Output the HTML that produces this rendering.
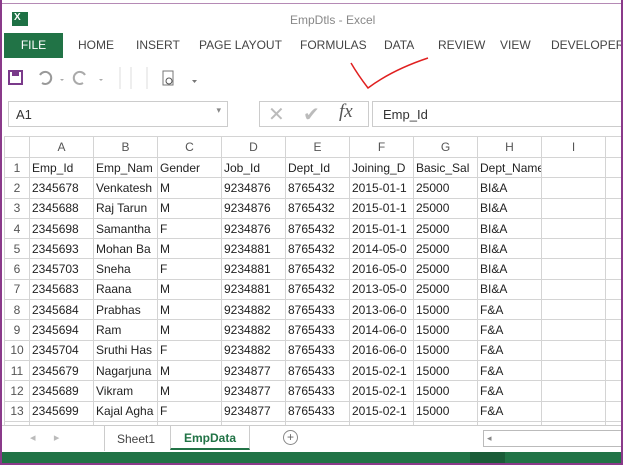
<!DOCTYPE html><html><head><style>
*{margin:0;padding:0;box-sizing:border-box}
body{width:623px;height:465px;overflow:hidden;background:#fff;font-family:"Liberation Sans",sans-serif;position:relative}
.a{position:absolute}
.tab{position:absolute;top:38px;font-size:12px;color:#444}
table{border-collapse:collapse;position:absolute;left:4px;top:136px;font-size:12px;color:#222;table-layout:fixed;width:631px}
td{border:1px solid #d4d4d4;height:20.3px;padding:0 2px;white-space:nowrap;overflow:hidden}
tr.h td{height:21px;text-align:center;color:#555;background:#fff;font-size:12px}
td.r{text-align:center;color:#555}
</style></head><body>
<div class="a" style="left:0;top:0;width:623px;height:465px;border:2px solid #8a3a8a;border-top:none;z-index:9;pointer-events:none"></div>
<div class="a" style="left:0;top:0;width:623px;height:4px;border-bottom:1px solid #b58ab5"></div>
<div class="a" style="left:12px;top:12px;width:16px;height:14px;background:#1e7145;color:#fff;font-size:10px;font-weight:bold;padding-left:2px">X</div>
<div class="a" style="left:290px;top:13px;font-size:12px;color:#888">EmpDtls - Excel</div>
<div class="a" style="left:4px;top:33px;width:59px;height:25px;background:#217346;color:#fff;font-size:12px;text-align:center;line-height:25px">FILE</div>
<div class="tab" style="left:78px">HOME</div><div class="tab" style="left:136px">INSERT</div><div class="tab" style="left:199px">PAGE LAYOUT</div><div class="tab" style="left:300px">FORMULAS</div><div class="tab" style="left:384px">DATA</div><div class="tab" style="left:438px">REVIEW</div><div class="tab" style="left:500px">VIEW</div><div class="tab" style="left:551px">DEVELOPER</div>
<svg class="a" style="left:0;top:55px" width="623" height="40"><path d="M351 8 Q358 20 368 33 Q392 15 428 3" stroke="#e02020" stroke-width="1.5" fill="none"/>
<rect x="9" y="16" width="13" height="13" fill="none" stroke="#7a3a8a" stroke-width="2"/><rect x="12" y="17" width="7" height="4" fill="#7a3a8a"/>
<path d="M40 20 a6 6 0 1 1 2 8" stroke="#999" stroke-width="2" fill="none"/><path d="M60 24h4l-2 2z" fill="#aaa"/><path d="M85 20 a6 6 0 1 0 -2 8" stroke="#aaa" stroke-width="2" fill="none"/><path d="M99 24h4l-2 2z" fill="#aaa"/>
<path d="M120 12v22M131 12v22M147 12v22" stroke="#ddd"/>
<rect x="163" y="16" width="10" height="14" fill="none" stroke="#777"/><circle cx="169" cy="26" r="3" fill="none" stroke="#555"/><path d="M192 25h5l-2.5 3z" fill="#777"/></svg>
<div class="a" style="left:8px;top:101px;width:220px;height:26px;border:1px solid #ccc;font-size:13px;padding:5px 7px;color:#333">A1<span style="position:absolute;right:6px;top:3px;font-size:9px;color:#888">▾</span></div>
<div class="a" style="left:259px;top:101px;width:110px;height:26px;border:1px solid #ccc"></div>
<div class="a" style="left:268px;top:102px;font-size:20px;color:#bbb">✕</div>
<div class="a" style="left:303px;top:102px;font-size:20px;color:#bbb">✔</div>
<div class="a" style="left:339px;top:101px;font-size:19px;color:#555;font-family:'Liberation Serif',serif;font-style:italic">fx</div>
<div class="a" style="left:372px;top:101px;width:260px;height:26px;border:1px solid #ccc;font-size:13px;padding:5px 10px;color:#333">Emp_Id</div>
<table>
<colgroup><col style="width:25px"><col style="width:64px"><col style="width:64px"><col style="width:64px"><col style="width:64px"><col style="width:64px"><col style="width:64px"><col style="width:64px"><col style="width:64px"><col style="width:64px"><col style="width:30px"></colgroup>
<tr class="h"><td></td><td>A</td><td>B</td><td>C</td><td>D</td><td>E</td><td>F</td><td>G</td><td>H</td><td>I</td><td></td></tr>
<tr><td class="r">1</td><td>Emp_Id</td><td>Emp_Nam</td><td>Gender</td><td>Job_Id</td><td>Dept_Id</td><td>Joining_D</td><td>Basic_Sal</td><td>Dept_Name</td><td></td><td></td></tr>
<tr><td class="r">2</td><td>2345678</td><td>Venkatesh</td><td>M</td><td>9234876</td><td>8765432</td><td>2015-01-1</td><td>25000</td><td>BI&amp;A</td><td></td><td></td></tr>
<tr><td class="r">3</td><td>2345688</td><td>Raj Tarun</td><td>M</td><td>9234876</td><td>8765432</td><td>2015-01-1</td><td>25000</td><td>BI&amp;A</td><td></td><td></td></tr>
<tr><td class="r">4</td><td>2345698</td><td>Samantha</td><td>F</td><td>9234876</td><td>8765432</td><td>2015-01-1</td><td>25000</td><td>BI&amp;A</td><td></td><td></td></tr>
<tr><td class="r">5</td><td>2345693</td><td>Mohan Ba</td><td>M</td><td>9234881</td><td>8765432</td><td>2014-05-0</td><td>25000</td><td>BI&amp;A</td><td></td><td></td></tr>
<tr><td class="r">6</td><td>2345703</td><td>Sneha</td><td>F</td><td>9234881</td><td>8765432</td><td>2016-05-0</td><td>25000</td><td>BI&amp;A</td><td></td><td></td></tr>
<tr><td class="r">7</td><td>2345683</td><td>Raana</td><td>M</td><td>9234881</td><td>8765432</td><td>2013-05-0</td><td>25000</td><td>BI&amp;A</td><td></td><td></td></tr>
<tr><td class="r">8</td><td>2345684</td><td>Prabhas</td><td>M</td><td>9234882</td><td>8765433</td><td>2013-06-0</td><td>15000</td><td>F&amp;A</td><td></td><td></td></tr>
<tr><td class="r">9</td><td>2345694</td><td>Ram</td><td>M</td><td>9234882</td><td>8765433</td><td>2014-06-0</td><td>15000</td><td>F&amp;A</td><td></td><td></td></tr>
<tr><td class="r">10</td><td>2345704</td><td>Sruthi Has</td><td>F</td><td>9234882</td><td>8765433</td><td>2016-06-0</td><td>15000</td><td>F&amp;A</td><td></td><td></td></tr>
<tr><td class="r">11</td><td>2345679</td><td>Nagarjuna</td><td>M</td><td>9234877</td><td>8765433</td><td>2015-02-1</td><td>15000</td><td>F&amp;A</td><td></td><td></td></tr>
<tr><td class="r">12</td><td>2345689</td><td>Vikram</td><td>M</td><td>9234877</td><td>8765433</td><td>2015-02-1</td><td>15000</td><td>F&amp;A</td><td></td><td></td></tr>
<tr><td class="r">13</td><td>2345699</td><td>Kajal Agha</td><td>F</td><td>9234877</td><td>8765433</td><td>2015-02-1</td><td>15000</td><td>F&amp;A</td><td></td><td></td></tr>
<tr><td class="r">14</td><td>2345706</td><td>Amala</td><td>F</td><td>9234884</td><td>8765436</td><td>2016-08-0</td><td>30000</td><td>R&amp;D</td><td></td><td></td></tr>
</table>
<div class="a" style="left:0;top:425px;width:623px;height:27px;background:#fff;border-top:1px solid #ccc"></div>
<div class="a" style="left:30px;top:431px;font-size:11px;color:#bbb">◂&nbsp;&nbsp;&nbsp;&nbsp;&nbsp;&nbsp;▸</div>
<div class="a" style="left:104px;top:425px;width:1px;height:26px;background:#ccc"></div>
<div class="a" style="left:117px;top:432px;font-size:12px;color:#444">Sheet1</div>
<div class="a" style="left:170px;top:425px;width:80px;height:25px;border-bottom:2px solid #217346;border-left:1px solid #ccc;border-right:1px solid #ccc;font-size:12px;font-weight:bold;color:#217346;text-align:center;padding-top:6px">EmpData</div>
<div class="a" style="left:283px;top:430px;width:15px;height:15px;border:1px solid #888;border-radius:50%;font-size:12px;line-height:13px;text-align:center;color:#666">+</div>
<div class="a" style="left:483px;top:430px;width:140px;height:17px;border:1px solid #bbb;font-size:9px;color:#888;padding:2px 3px">◂</div>
<div class="a" style="left:0;top:452px;width:623px;height:13px;background:#217346"></div>
<div class="a" style="left:470px;top:452px;width:35px;height:13px;background:#1a5c38"></div>
</body></html>
